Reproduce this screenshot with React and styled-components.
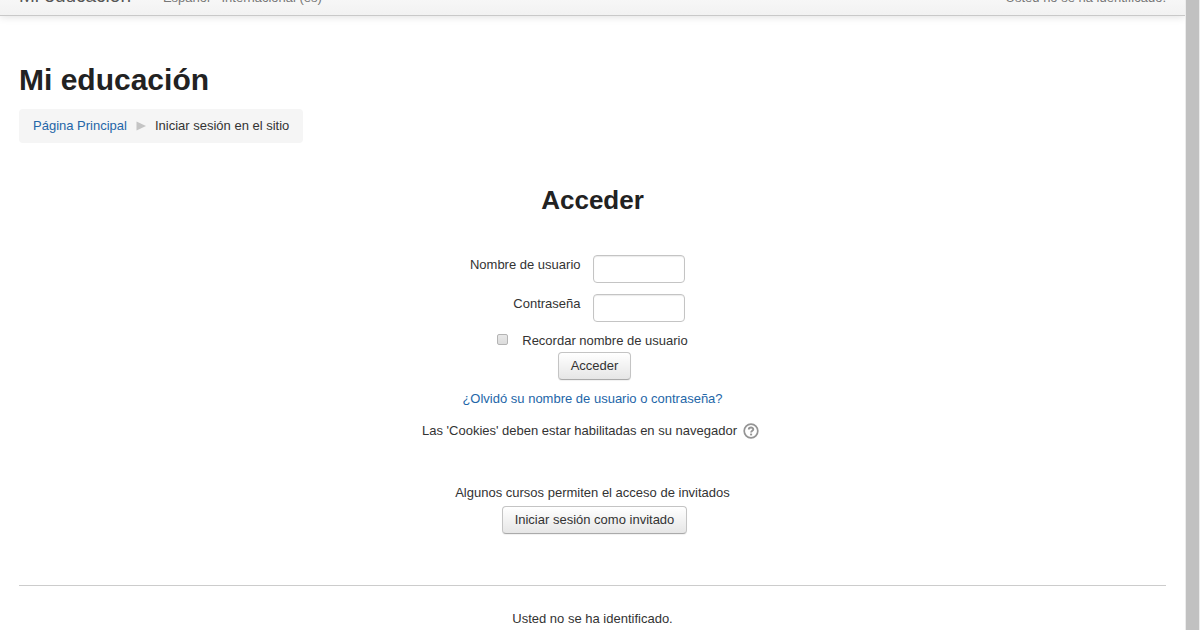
import React from 'react';
import styled, { createGlobalStyle } from 'styled-components';

const GlobalStyle = createGlobalStyle`
  *, *::before, *::after { box-sizing: border-box; }
  html { overflow: hidden; }
  body {
    margin: 0;
    background: #fff;
    color: #333;
    font: 13px/20px "Liberation Sans", Arial, sans-serif;
  }
  button, input { font: inherit; color: inherit; }
`;

const Shell = styled.div`
  display: flex;
  height: 100vh;
  overflow: hidden;
`;

const Page = styled.div`
  flex: 1;
  min-width: 0;
`;

const ScrollTrack = styled.div`
  flex: none;
  width: 15px;
  padding: 0 1px;
  background: #ececec;
`;

const ScrollThumb = styled.div`
  height: 100%;
  background: #c1c1c1;
`;

const Navbar = styled.header`
  display: flex;
  align-items: baseline;
  height: 41px;
  margin-top: -25px;
  padding: 11px 19px 0;
  border-bottom: 1px solid #c9c9c9;
  background: linear-gradient(#fff, #f2f2f2);
  box-shadow: 0 1px 8px rgba(0, 0, 0, 0.12);
`;

const Brand = styled.a`
  margin-right: 32px;
  color: #555;
  font-size: 19px;
  text-decoration: none;
`;

const NavLink = styled.a`
  color: #777;
  text-decoration: none;
`;

const NavStatus = styled.span`
  margin-left: auto;
  color: #777;
`;

const Main = styled.main`
  padding: 44px 19px 0;
`;

const SiteTitle = styled.h1`
  margin: 0 0 9px;
  color: #222;
  font-size: 30px;
  line-height: 40px;
`;

const Breadcrumb = styled.nav`
  display: inline-flex;
  align-items: center;
  gap: 9px;
  padding: 7px 14px;
  border-radius: 4px;
  background: #f5f5f5;
  vertical-align: top;
`;

const Link = styled.a`
  color: #2466a8;
  text-decoration: none;
`;

const Login = styled.section`
  display: flex;
  flex-direction: column;
  align-items: center;
  margin-top: 37px;
`;

const Heading = styled.h2`
  margin: 0 0 35px;
  color: #222;
  font-size: 26px;
  line-height: 40px;
`;

const Form = styled.form`
  display: flex;
  flex-direction: column;
  align-items: center;
`;

const Fields = styled.div`
  display: grid;
  grid-template-columns: 188px 200px;
  gap: 11px 12px;
  margin-bottom: 9px;
`;

const FieldLabel = styled.label`
  text-align: right;
`;

const TextInput = styled.input`
  width: 92px;
  height: 28px;
  padding: 4px 6px;
  border: 1px solid #c4c4c4;
  border-radius: 4px;
  background: #fff;
  box-shadow: inset 0 1px 1px rgba(0, 0, 0, 0.08);
`;

const Remember = styled.label`
  display: flex;
  gap: 14px;
  margin-bottom: 1px;
`;

const Checkbox = styled.input`
  appearance: none;
  width: 11px;
  height: 11px;
  margin: 3px 0 0;
  border: 1px solid #b4b4b4;
  border-radius: 2px;
  background: linear-gradient(#e8e8e8, #dcdcdc);
`;

const Button = styled.button`
  height: 28px;
  margin-left: 4px;
  padding: 0 12px;
  border: 1px solid #c4c4c4;
  border-bottom-color: #aaa;
  border-radius: 4px;
  background: linear-gradient(#fff, #e6e6e6);
  box-shadow: 0 1px 1px rgba(0, 0, 0, 0.06);
`;

const Paragraph = styled.p`
  display: flex;
  align-items: center;
  gap: 6px;
  margin: ${({ $top }) => $top}px 0 0;
`;

const HelpButton = styled.button`
  display: flex;
  margin-right: 4px;
  padding: 0;
  border: 0;
  background: none;
`;

const Footer = styled.footer`
  margin-top: 51px;
  padding-top: 23px;
  border-top: 1px solid #ccc;
  text-align: center;
`;

function Arrow() {
  return (
    <svg width="10" height="10" viewBox="0 0 10 10" aria-hidden="true">
      <path d="M0.5 0.5 L10 5 L0.5 9.5 Z" fill="#c4c4c4" />
    </svg>
  );
}

function HelpIcon() {
  return (
    <svg width="16" height="16" viewBox="0 0 16 16" fill="none" stroke="#949494" aria-hidden="true">
      <circle cx="8" cy="8" r="6.8" strokeWidth="1.7" />
      <path d="M5.8 6.4 C5.8 3.9 10.3 3.9 10.3 6.3 C10.3 7.8 8.1 7.8 8.1 9.6" strokeWidth="1.9" />
      <path d="M8.1 10.6 V12.4" strokeWidth="2" />
    </svg>
  );
}

export default function App() {
  return (
    <>
      <GlobalStyle />
      <Shell>
        <Page>
          <Navbar>
            <Brand href="#">Mi educación</Brand>
            <NavLink href="#">Español - Internacional (es)</NavLink>
            <NavStatus>Usted no se ha identificado.</NavStatus>
          </Navbar>
          <Main>
            <SiteTitle>Mi educación</SiteTitle>
            <Breadcrumb aria-label="Ruta">
              <Link href="#">Página Principal</Link>
              <Arrow />
              <span>Iniciar sesión en el sitio</span>
            </Breadcrumb>
            <Login>
              <Heading>Acceder</Heading>
              <Form onSubmit={(e) => e.preventDefault()}>
                <Fields>
                  <FieldLabel htmlFor="username">Nombre de usuario</FieldLabel>
                  <TextInput id="username" type="text" />
                  <FieldLabel htmlFor="password">Contraseña</FieldLabel>
                  <TextInput id="password" type="password" />
                </Fields>
                <Remember>
                  <Checkbox type="checkbox" />
                  Recordar nombre de usuario
                </Remember>
                <Button type="submit">Acceder</Button>
              </Form>
              <Paragraph $top={9}>
                <Link href="#">¿Olvidó su nombre de usuario o contraseña?</Link>
              </Paragraph>
              <Paragraph $top={12}>
                Las 'Cookies' deben estar habilitadas en su navegador
                <HelpButton type="button" aria-label="Ayuda">
                  <HelpIcon />
                </HelpButton>
              </Paragraph>
              <Paragraph $top={42}>Algunos cursos permiten el acceso de invitados</Paragraph>
              <Paragraph $top={3}>
                <Button type="button">Iniciar sesión como invitado</Button>
              </Paragraph>
            </Login>
            <Footer>Usted no se ha identificado.</Footer>
          </Main>
        </Page>
        <ScrollTrack>
          <ScrollThumb />
        </ScrollTrack>
      </Shell>
    </>
  );
}
